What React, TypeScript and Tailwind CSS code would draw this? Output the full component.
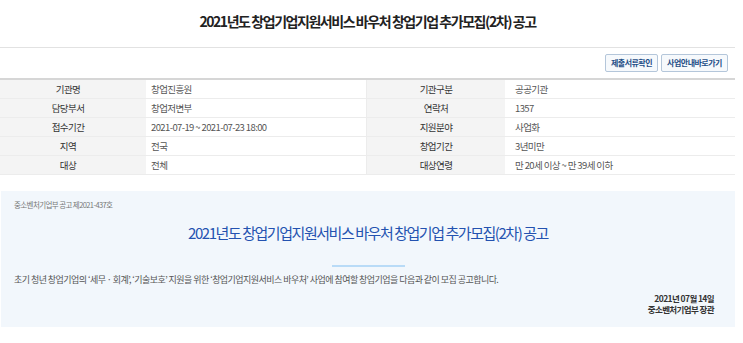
import React from "react";

const rows: [string, string, string, string][] = [
  ["기관명", "창업진흥원", "기관구분", "공공기관"],
  ["담당부서", "창업저변부", "연락처", "1357"],
  ["접수기간", "2021-07-19 ~ 2021-07-23 18:00", "지원분야", "사업화"],
  ["지역", "전국", "창업기간", "3년미만"],
  ["대상", "전체", "대상연령", "만 20세 이상 ~ 만 39세 이하"],
];

export default function App() {
  return (
    <div className="w-[743px] h-[343px] bg-white font-['Noto_Sans_CJK_KR','Noto_Sans',sans-serif] overflow-hidden">
      <div className="w-[735px]">
        <h1 className="h-[48px] pt-[11px] text-center text-[14px] leading-[20px] font-bold text-[#222] tracking-[-1.45px] border-b border-[#e2e2e2]">
          2021년도 창업기업지원서비스 바우처 창업기업 추가모집(2차) 공고
        </h1>
        <div className="h-[30px] flex justify-end items-start pt-[6px] pr-[7px] gap-[3px]">
          <button className="w-[53px] h-[18px] border border-[#b4c6da] rounded-[2px] bg-[#f6f9fc] text-[8px] leading-[16px] font-bold text-[#1f4e87] tracking-[-0.5px]">
            제출서류확인
          </button>
          <button className="w-[67px] h-[18px] border border-[#b4c6da] rounded-[2px] bg-[#f6f9fc] text-[8px] leading-[16px] font-bold text-[#1f4e87] tracking-[-0.5px]">
            사업안내바로가기
          </button>
        </div>
        <div className="border-t-2 border-[#d6d6d6]">
          {rows.map((r, i) => (
            <div key={i} className="flex h-[19px] border-b border-[#ececec] text-[9.5px] leading-[18px] tracking-[-0.6px]">
              <div className="w-[146px] pr-[10px] bg-[#f4f4f4] text-center text-[#333]">{r[0]}</div>
              <div className="w-[221px] pl-[5px] text-[#555] border-r border-[#ececec]">{r[1]}</div>
              <div className="w-[138px] bg-[#f4f4f4] text-center text-[#333]">{r[2]}</div>
              <div className="flex-1 pl-[10px] text-[#555]">{r[3]}</div>
            </div>
          ))}
        </div>
        <div className="mt-[16px] ml-[1px] h-[136px] bg-[#f2f7fc] pt-[10px] px-[13px]">
          <p className="text-[7.5px] leading-[8px] text-[#777] tracking-[-0.6px]">중소벤처기업부 공고 제2021-437호</p>
          <h2 className="mt-[14px] text-center text-[15px] leading-[20px] text-[#2452b0] tracking-[-1.45px]">
            2021년도 창업기업지원서비스 바우처 창업기업 추가모집(2차) 공고
          </h2>
          <div className="mt-[22px] mx-auto w-[73px] h-[2px] bg-[#b9dbf7]" />
          <p className="mt-[7px] text-[9px] leading-[12px] text-[#555] tracking-[-0.55px]">
            초기 청년 창업기업의 ‘세무 · 회계’, ‘기술보호’ 지원을 위한 ‘창업기업지원서비스 바우처’ 사업에 참여할 창업기업을 다음과 같이 모집 공고합니다.
          </p>
          <div className="mt-[7px] pr-[8px] text-right text-[8.5px] leading-[11px] font-bold text-[#333] tracking-[-0.6px]">
            <div>2021년 07월 14일</div>
            <div>중소벤처기업부 장관</div>
          </div>
        </div>
      </div>
    </div>
  );
}
